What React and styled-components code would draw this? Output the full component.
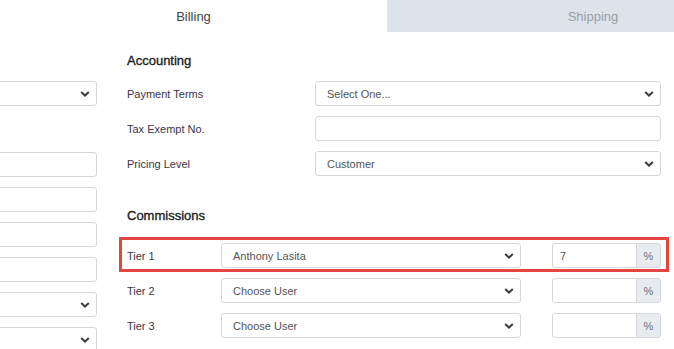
import React from "react";
import styled, { createGlobalStyle } from "styled-components";

const Global = createGlobalStyle`
  html, body { margin: 0; padding: 0; background: #fff; }
  body { font-family: "Liberation Sans", Arial, sans-serif; }
  * { box-sizing: border-box; }
`;

const Page = styled.div`
  width: 674px;
  height: 349px;
  overflow: hidden;
  background: #fff;
`;

const Tabs = styled.div`
  display: flex;
  height: 32px;
  width: 800px;
`;

const Tab = styled.div`
  width: ${(p) => p.$w}px;
  flex: none;
  display: flex;
  align-items: center;
  justify-content: center;
  font-size: 13px;
  color: ${(p) => (p.$active ? "#444" : "#999fa6")};
  background: ${(p) => (p.$active ? "#fff" : "#dce3eb")};
`;

const Body = styled.div`
  display: flex;
  gap: 30px;
`;

const LeftCol = styled.div`
  width: 300px;
  margin-left: -203px;
  flex: none;
  padding-top: 49px;
  display: flex;
  flex-direction: column;
  gap: 10px;
`;

const Spacer = styled.div`
  height: 26px;
`;

const RightCol = styled.div`
  width: 534px;
  flex: none;
  padding-top: 21px;
`;

const Heading = styled.div`
  font-size: 13px;
  line-height: 16px;
  height: 16px;
  color: #222;
  -webkit-text-stroke: 0.35px #222;
  margin-top: ${(p) => p.$mt || 0}px;
  margin-bottom: ${(p) => p.$mb || 0}px;
`;

const FormGrid = styled.div`
  display: grid;
  grid-template-columns: 188px 346px;
  row-gap: 10px;
  align-items: center;
`;

const Label = styled.div`
  font-size: 11px;
  color: #3b3546;
`;

const Field = styled.div`
  position: relative;
  height: 25px;
  border: 1px solid #d3d7dc;
  border-radius: ${(p) => p.$radius || "3px"};
  background: #fff;
  display: flex;
  align-items: center;
  padding-left: ${(p) => (p.$pl != null ? p.$pl : 11)}px;
  font-size: 11px;
  color: #555;
`;

const Chevron = styled.svg`
  position: absolute;
  right: 6px;
  top: 50%;
  margin-top: -3px;
`;

const Arrow = () => (
  <Chevron width="10" height="6" viewBox="0 0 10 6">
    <polyline points="1.2,1 5,4.6 8.8,1" fill="none" stroke="#3a3f45" strokeWidth="2" />
  </Chevron>
);

const Select = ({ children }) => (
  <Field>
    {children}
    <Arrow />
  </Field>
);

const TierList = styled.div`
  display: flex;
  flex-direction: column;
  gap: 10px;
`;

const TierRow = styled.div`
  position: relative;
  display: grid;
  grid-template-columns: 94px 300px 140px;
  align-items: center;
  ${(p) =>
    p.$highlight &&
    `&::after {
      content: "";
      position: absolute;
      left: -8px;
      right: -8px;
      top: -6px;
      bottom: -4px;
      border: 3px solid #e5443f;
      pointer-events: none;
    }`}
`;

const PercentGroup = styled.div`
  display: flex;
  width: 109px;
  margin-left: 31px;
`;

const Addon = styled.div`
  width: 25px;
  height: 25px;
  margin-left: -1px;
  border: 1px solid #d3d7dc;
  border-radius: 0 3px 3px 0;
  background: #e9ecef;
  display: flex;
  align-items: center;
  justify-content: center;
  font-size: 11px;
  color: #6c7178;
`;

const PercentInput = styled(Field)`
  flex: 1;
`;

const Percent = ({ value }) => (
  <PercentGroup>
    <PercentInput $radius="3px 0 0 3px" $pl={7}>{value}</PercentInput>
    <Addon>%</Addon>
  </PercentGroup>
);

export default function App() {
  const tiers = [
    { label: "Tier 1", user: "Anthony Lasita", pct: "7", hl: true },
    { label: "Tier 2", user: "Choose User", pct: "" },
    { label: "Tier 3", user: "Choose User", pct: "" },
  ];
  return (
    <Page>
      <Global />
      <Tabs>
        <Tab $w={387} $active>Billing</Tab>
        <Tab $w={412}>Shipping</Tab>
      </Tabs>
      <Body>
        <LeftCol>
          <Select />
          <Spacer />
          <Field />
          <Field />
          <Field />
          <Field />
          <Select />
          <Select />
        </LeftCol>
        <RightCol>
          <Heading $mb={12}>Accounting</Heading>
          <FormGrid>
            <Label>Payment Terms</Label>
            <Select>Select One...</Select>
            <Label>Tax Exempt No.</Label>
            <Field />
            <Label>Pricing Level</Label>
            <Select>Customer</Select>
          </FormGrid>
          <Heading $mt={32} $mb={19}>Commissions</Heading>
          <TierList>
            {tiers.map((t) => (
              <TierRow key={t.label} $highlight={t.hl}>
                <Label>{t.label}</Label>
                <Select>{t.user}</Select>
                <Percent value={t.pct} />
              </TierRow>
            ))}
          </TierList>
        </RightCol>
      </Body>
    </Page>
  );
}
